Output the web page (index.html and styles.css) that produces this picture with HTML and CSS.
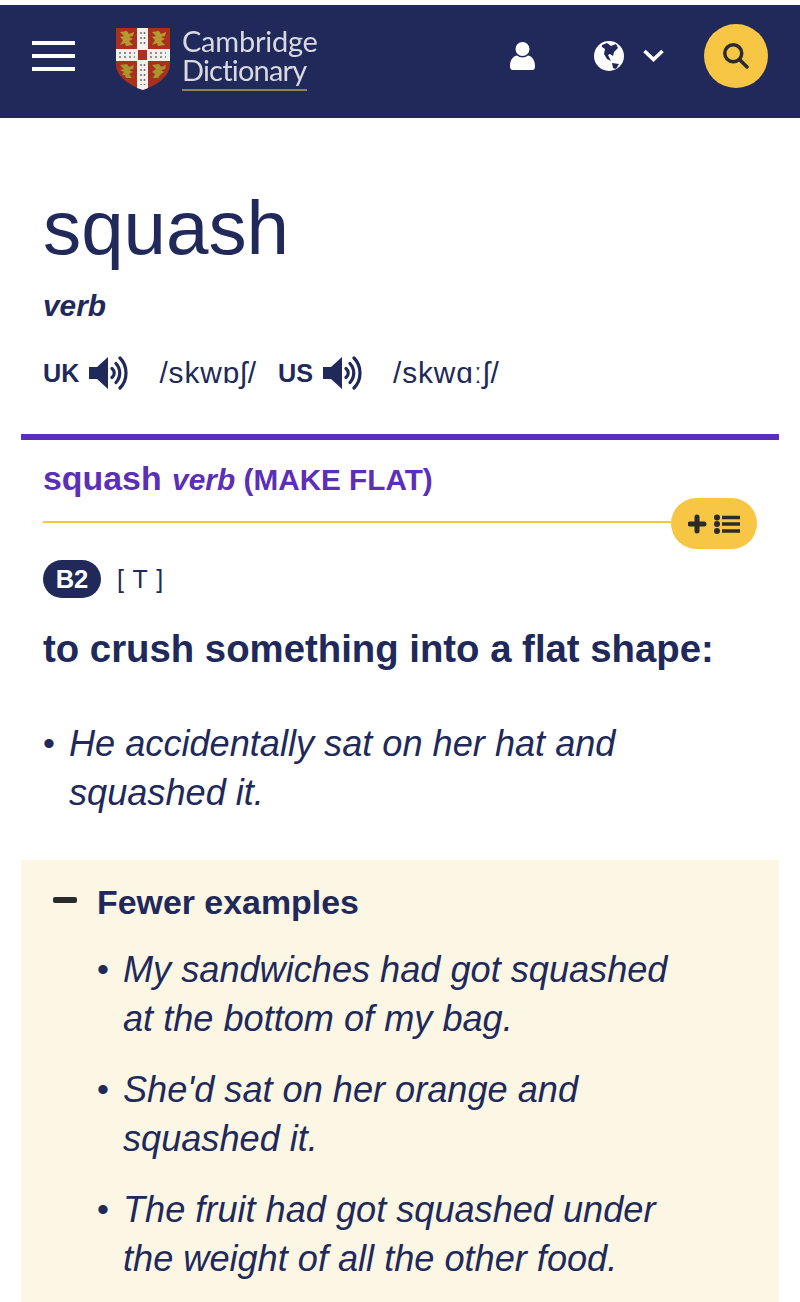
FILE: index.html
```html
<!DOCTYPE html>
<html lang="en">
<head>
<meta charset="utf-8">
<title>squash - Cambridge Dictionary</title>
<link rel="stylesheet" href="styles.css">
</head>
<body>
<header class="topbar">
  <div class="burger"><span></span><span></span><span></span></div>
  <a class="logo">
    <svg class="shield" viewBox="0 0 54 62">
      <path d="M0 0H54V36C54 49 41 57 27 62C13 57 0 49 0 36Z" fill="#a92f1e"/>
      <path d="M21 0H32V21H54V33H32V60L27 62L21 60V33H0V21H21Z" fill="#f4f1ec"/>
      <rect x="22" y="22" width="9" height="10" fill="#a8321f"/>
      <path d="M4 4L11 3L13 6L18 4L17 8L13 9L17 11L13 13L17 17L10 18L9 15L4 17L7 12L4 9L8 8Z" fill="#b79a2f"/>
      <path d="M36 4L43 3L45 6L50 4L49 8L45 9L49 11L45 13L49 17L42 18L41 15L36 17L39 12L36 9L40 8Z" fill="#b79a2f"/>
      <path d="M4 37L11 36L13 39L18 37L17 41L13 42L17 44L13 46L16 50L10 50L9 47L6 47L8 44L4 42L8 41Z" fill="#a8952c"/>
      <path d="M36 37L43 36L45 39L50 37L49 41L45 42L48 44L45 46L42 50L37 50L39 46L36 44L40 41Z" fill="#a8952c"/>
      <path d="M3 25h16M3 29h16M34 25h16M34 29h16M25 4v15M28.500 4v15M25 36v21M28.500 36v21" stroke="#6e6e72" stroke-width="1.500" stroke-dasharray="2 3"/>
    </svg>
    <span class="wordmark"><span class="wm-top">Cambridge</span><span class="wm-bottom">Dictionary</span></span>
  </a>
  <svg class="user" viewBox="0 0 25 28"><circle cx="12.500" cy="7" r="7" fill="#fff"/><path d="M0 24C0 17 4 14 7 13.500C10 16 15 16 18 13.500C21 14 25 17 25 24C25 27 24 28 22 28H3C1 28 0 27 0 24Z" fill="#fff"/></svg>
  <svg class="globe" viewBox="0 0 30 30"><circle cx="15" cy="15" r="15" fill="#fff"/><path d="M8 4L13 2L17 5L22 3L24 7L20 11L19 15L16 13L14 14L17 20L13 18L10 13L11 8L8 6Z" fill="#20295a"/><path d="M18 22L25 23L22 28L19 27Z" fill="#20295a"/></svg>
  <svg class="chevron" viewBox="0 0 21 13"><path d="M1.500 2L10.500 10.500L19.500 2" fill="none" stroke="#fff" stroke-width="3.600"/></svg>
  <button class="search"><svg viewBox="0 0 26 26"><circle cx="10.250" cy="10.250" r="8.500" fill="none" stroke="#2b2b2b" stroke-width="3.500"/><path d="M17 17L24 24" stroke="#2b2b2b" stroke-width="3.500" stroke-linecap="round"/></svg></button>
</header>

<main class="entry">
  <section class="head">
    <h1 class="word">squash</h1>
    <div class="pos">verb</div>
    <div class="prons">
      <span class="region">UK</span>
      <svg class="speaker" viewBox="0 0 40 34"><path d="M0 11H8L19 1V33L8 23H0Z" fill="#20295a"/><path d="M23 12.500C26 15 26 19 23 21.500M27 7.500C32 13 32 21 27 26.500M31 2C39 10 39 24 31 32" fill="none" stroke="#20295a" stroke-width="3.200" stroke-linecap="round"/></svg>
      <span class="ipa ipa-uk">/skwɒʃ/</span>
      <span class="region">US</span>
      <svg class="speaker" viewBox="0 0 40 34"><path d="M0 11H8L19 1V33L8 23H0Z" fill="#20295a"/><path d="M23 12.500C26 15 26 19 23 21.500M27 7.500C32 13 32 21 27 26.500M31 2C39 10 39 24 31 32" fill="none" stroke="#20295a" stroke-width="3.200" stroke-linecap="round"/></svg>
      <span class="ipa">/skwɑːʃ/</span>
    </div>
  </section>

  <section class="sense">
    <h2 class="sense-title">squash <i class="sense-pos">verb</i> <span class="sense-guide">(MAKE FLAT)</span></h2>
    <div class="rule-row">
      <div class="rule"></div>
      <button class="add-list">
        <svg viewBox="0 0 52 20"><path d="M9 3V17M2 10H16" stroke="#2b2b2b" stroke-width="5" stroke-linecap="round"/><circle cx="29" cy="3.500" r="3" fill="#2b2b2b"/><circle cx="29" cy="10" r="3" fill="#2b2b2b"/><circle cx="29" cy="17" r="3" fill="#2b2b2b"/><path d="M34 3.500H52M34 10H52M34 17H52" stroke="#2b2b2b" stroke-width="3.400"/></svg>
      </button>
    </div>
    <div class="labels"><span class="level">B2</span><span class="gram">[ T ]</span></div>
    <p class="definition">to crush something into a flat shape:</p>
    <ul class="examples main-examples">
      <li>He accidentally sat on her hat and<br>squashed it.</li>
    </ul>
  </section>

  <section class="more">
    <div class="toggle"><span class="minus"></span><span>Fewer examples</span></div>
    <ul class="examples">
      <li>My sandwiches had got squashed<br>at the bottom of my bag.</li>
      <li>She'd sat on her orange and<br>squashed it.</li>
      <li>The fruit had got squashed under<br>the weight of all the other food.</li>
    </ul>
  </section>
</main>
</body>
</html>
```
FILE: styles.css
```css
* { box-sizing: border-box; }
html, body { margin: 0; padding: 0; }
body {
  height: 1302px;
  overflow: hidden;
  background: #fff;
  color: #20295a;
  font-family: "Liberation Sans", Arial, sans-serif;
  padding-top: 5px;
}
.topbar {
  height: 113px;
  background: #20295a;
  display: flex;
  align-items: center;
  padding-left: 32px;
  padding-bottom: 12px;
}
.burger { width: 43px; display: flex; flex-direction: column; gap: 9px; }
.burger span { display: block; height: 4px; background: #fff; }
.logo { display: flex; align-items: center; margin-left: 41px; gap: 12px; margin-top: 7px; filter: blur(0.4px); }
.shield { width: 54px; height: 62px; display: block; }
.wordmark {
  font-family: Lato, sans-serif;
  font-size: 29px;
  line-height: 29px;
  color: #d9dae1;
  padding-bottom: 5px;
  border-bottom: 2px solid #94815a;
  width: 125px;
  white-space: nowrap;
  margin-top: -2px;
}
.wm-top { display: block; letter-spacing: -0.25px; }
.wm-bottom { display: block; letter-spacing: -0.8px; }
.user { width: 25px; height: 28px; margin-left: 203px; }
.globe { width: 30px; height: 30px; margin-left: 59px; }
.chevron { width: 21px; height: 13px; margin-left: 19px; }
.search {
  width: 64px; height: 64px; border-radius: 50%;
  border: 0; padding: 0; margin-left: 40px;
  background: #f6c644;
  display: flex; align-items: center; justify-content: center;
}
.search svg { width: 26px; height: 26px; display: block; margin-left: -1px; }

.head { padding: 70px 43px 0; }
.word { margin: 0; font-size: 76.3px; line-height: 80px; font-weight: 400; }
.pos { font-size: 29.87px; font-style: italic; font-weight: 700; line-height: 34px; margin-top: 21px; }
.prons { display: flex; align-items: center; margin-top: 30px; height: 40px; }
.region { font-size: 25.2px; font-weight: 700; }
.speaker { width: 40px; height: 34px; margin-left: 10px; }
.ipa { font-size: 29.87px; margin-left: 30px; letter-spacing: 0.9px; }
.ipa-uk { margin-right: 21px; }

.sense {
  margin: 41px 21px 0;
  padding: 0 22px;
  border-top: 6px solid #5b2fb8;
}
.sense-title { margin: 0; padding-top: 18px; font-size: 33.9px; line-height: 40px; font-weight: 700; color: #5b2fb8; }
.sense-pos { font-size: 29.87px; margin-left: 1px; }
.sense-guide { font-size: 29.7px; margin-left: -1px; }
.rule-row { display: flex; align-items: center; margin-top: -2px; height: 51px; }
.rule { flex: 1; height: 2px; background: #f6c644; margin-top: -3px; }
.add-list {
  width: 86px; height: 51px; border: 0; padding: 0; border-radius: 26px;
  background: #f6c644; display: flex; align-items: center; justify-content: center;
}
.add-list svg { width: 52px; height: 20px; display: block; }
.labels { display: flex; align-items: center; margin-top: 11px; gap: 16px; }
.level {
  width: 58px; height: 38px; border-radius: 19px; background: #20295a; color: #fff;
  font-size: 25.6px; font-weight: 700; display: flex; align-items: center; justify-content: center;
}
.gram { font-size: 25px; word-spacing: 2px; }
.definition { margin: 26px 0 0; font-size: 38.35px; line-height: 49px; font-weight: 700; }
.examples { list-style: none; margin: 0; padding: 0; }
.examples li {
  position: relative; padding-left: 26px;
  font-size: 36.15px; line-height: 49px; font-style: italic;
}
.examples li::before {
  content: "•"; position: absolute; left: 0; top: 0; font-style: normal; font-size: 34px;
}
.main-examples { margin-top: 46px; }
.more {
  margin: 43px 21px 0;
  background: #fcf6e4;
  padding: 18px 0 0 32px;
  height: 442px;
}
.toggle { display: flex; align-items: center; font-size: 33.9px; font-weight: 700; line-height: 48px; }
.minus { width: 24px; height: 6px; border-radius: 2px; background: #2b2b2b; margin-right: 20px; margin-top: -4px; }
.more .examples { margin-left: 44px; margin-top: 19px; }
.more .examples li { margin-bottom: 22px; }
```
